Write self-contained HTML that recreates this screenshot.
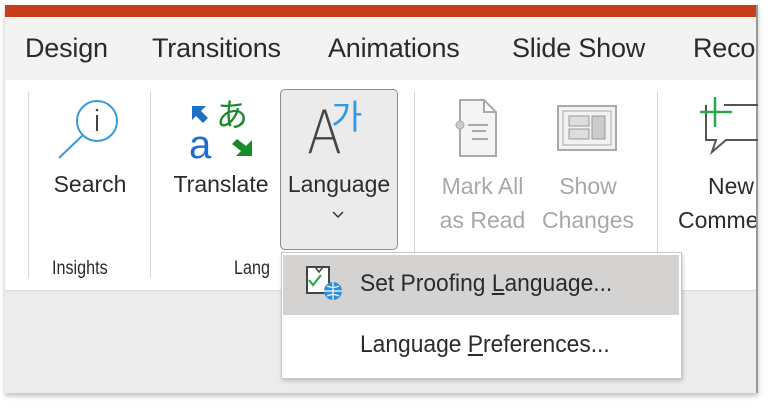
<!DOCTYPE html>
<html><head><style>
body{margin:0;width:768px;height:408px;background:#fff;position:relative;overflow:hidden;font-family:"Liberation Sans",sans-serif;}
.a{position:absolute}
.t{position:absolute;font-size:27px;color:#2b2b2b;top:33px;white-space:nowrap;letter-spacing:-0.2px}
.l{position:absolute;font-size:23px;color:#2b2b2b;white-space:nowrap;text-align:center;letter-spacing:0px}
.g{color:#a8a8a8}
.sep{position:absolute;width:1px;background:#d6d6d6;top:92px;height:186px}
</style></head><body>
<div class="a" style="left:5px;top:5px;width:751px;height:388px;background:#ececec;box-shadow:0 3px 5px rgba(0,0,0,0.25);border-right:2px solid #9a9a9a"></div>
<div class="a" style="left:5px;top:5px;width:751px;height:12px;background:#c43e1c"></div>
<div class="a" style="left:5px;top:17px;width:751px;height:63px;background:#f3f3f3"></div>
<div class="a" style="left:5px;top:80px;width:751px;height:210px;background:#fff;border-bottom:1px solid #d8d8d8"></div>
<div class="t" style="left:25px">Design</div>
<div class="t" style="left:152px">Transitions</div>
<div class="t" style="left:328px">Animations</div>
<div class="t" style="left:512px">Slide Show</div>
<div class="t" style="left:693px;width:62px;overflow:hidden">Recor</div>
<div class="sep" style="left:28px"></div><div class="sep" style="left:150px"></div><div class="sep" style="left:414px"></div><div class="sep" style="left:657px"></div>
<svg class="a" style="left:50px;top:95px" width="80" height="70"><circle cx="47" cy="26" r="20" fill="none" stroke="#3b9ad9" stroke-width="2"/><line x1="47" y1="20" x2="47" y2="36" stroke="#444" stroke-width="2"/><circle cx="47" cy="15" r="1.3" fill="#444"/><line x1="33" y1="40" x2="9" y2="63" stroke="#3b9ad9" stroke-width="2"/></svg>
<div class="l" style="left:40px;top:171px;width:100px">Search</div>
<svg class="a" style="left:188px;top:96px" width="70" height="64"><path d="M4 10 L18 10 L13 15 L20 22 L15 27 L8 20 L4 24Z" fill="#1e6fc7"/><text x="1" y="62" font-size="40" font-family="Liberation Sans" fill="#1e6fc7">a</text><text x="28" y="30" font-size="32" font-family="Noto Sans CJK JP" fill="#178a2a">あ</text><path d="M64 60 L48 60 L53 55 L44 48 L49 43 L58 50 L64 44Z" fill="#178a2a"/></svg>
<div class="l" style="left:164px;top:171px;width:114px">Translate</div>
<div class="a" style="left:280px;top:89px;width:116px;height:159px;background:#ebebeb;border:1px solid #8c8c8c;border-radius:5px"></div>
<div class="a" style="left:307px;top:98px;font-size:60px;color:#444;font-family:'DejaVu Sans','Liberation Sans';font-weight:200;transform:scaleX(0.85);transform-origin:left">A</div>
<div class="a" style="left:331px;top:90px;font-size:34px;color:#2f9be3;font-family:'Noto Sans CJK KR',sans-serif">가</div>
<div class="l" style="left:278px;top:171px;width:122px">Language</div>
<svg class="a" style="left:332px;top:211px" width="12" height="8"><path d="M1 1 L6 6 L11 1" fill="none" stroke="#333" stroke-width="1.5"/></svg>
<svg class="a" style="left:450px;top:98px" width="60" height="62"><path d="M10 2 H34 L46 14 V58 H10 Z M34 2 V14 H46" fill="#f4f4f4" stroke="#aaa" stroke-width="2"/><circle cx="10" cy="27" r="4" fill="#ccc" stroke="#aaa"/><path d="M18 27H38M22 33H36M22 41H38" stroke="#aaa" stroke-width="2"/></svg>
<svg class="a" style="left:556px;top:104px" width="64" height="50"><rect x="2" y="2" width="58" height="44" fill="#f2f2f2" stroke="#aaa" stroke-width="2"/><rect x="7" y="7" width="48" height="34" fill="none" stroke="#aaa"/><rect x="13" y="12" width="20" height="10" fill="#ddd" stroke="#999"/><rect x="13" y="25" width="20" height="10" fill="#ddd" stroke="#999"/><rect x="36" y="12" width="13" height="23" fill="#ccc" stroke="#999"/></svg>
<div class="l g" style="left:425px;top:169px;width:115px;line-height:34px">Mark All<br>as Read</div>
<div class="l g" style="left:533px;top:169px;width:110px;line-height:34px">Show<br>Changes</div>
<svg class="a" style="left:698px;top:95px" width="60" height="62"><path d="M8 10 V45 H18 L14 57 L28 45 H60" fill="none" stroke="#555" stroke-width="2"/><path d="M26 10 H60" stroke="#555" stroke-width="2"/><path d="M2 17 H34 M17 2 V32" stroke="#2aa84a" stroke-width="2.5"/></svg>
<div class="l" style="left:678px;top:169px;width:78px;overflow:hidden;text-align:left;line-height:34px"><span style="padding-left:30px">New</span><br>Comme</div>
<div class="l" style="left:52px;top:258px;font-size:19px;transform:scaleX(0.85);transform-origin:left">Insights</div>
<div class="l" style="left:234px;top:258px;font-size:19px;transform:scaleX(0.85);transform-origin:left">Lang</div>
<div class="a" style="left:281px;top:252px;width:399px;height:125px;background:#fff;border:1px solid #c8c8c8;box-shadow:1px 2px 4px rgba(0,0,0,0.2)"></div>
<div class="a" style="left:283px;top:255px;width:396px;height:60px;background:#d4d3d2"></div>
<svg class="a" style="left:305px;top:265px" width="40" height="40"><path d="M2 2 H24 V28 H2 Z" fill="#fff" stroke="#444" stroke-width="2"/><path d="M10 2 L14 7 L18 2" fill="none" stroke="#444" stroke-width="1.5"/><path d="M4 15 L8 20 L16 10" fill="none" stroke="#2aa84a" stroke-width="2.2"/><circle cx="28" cy="26" r="9" fill="#2f8fdc"/><path d="M19 26 H37 M28 17 V35 M22 21 Q28 24 34 21 M22 31 Q28 28 34 31" stroke="#fff" stroke-width="1.2" fill="none"/></svg>
<div class="l" style="left:360px;top:270px;text-align:left;font-size:24px;transform:scaleX(0.95);transform-origin:left">Set Proofing <u>L</u>anguage...</div>
<div class="l" style="left:360px;top:331px;text-align:left;font-size:24px;transform:scaleX(0.95);transform-origin:left">Language <u>P</u>references...</div>
</body></html>
